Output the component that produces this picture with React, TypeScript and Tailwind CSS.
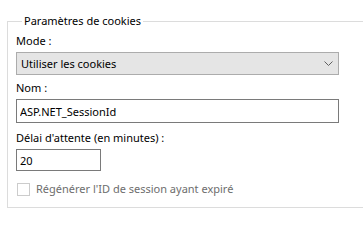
const font = { fontFamily: '"Noto Sans", "Segoe UI", sans-serif' }

function Chevron() {
  return (
    <svg width="9" height="5" viewBox="0 0 9 5" className="text-[#606060]">
      <polyline points="0.5,0.5 4.5,4.5 8.5,0.5" fill="none" stroke="currentColor" strokeWidth="1" />
    </svg>
  )
}

export default function App() {
  return (
    <div className="h-[217px] w-[363px] overflow-hidden bg-white text-[11px] text-black" style={font}>
      <fieldset className="ml-[7px] mt-[13px] w-[370px] border border-r-0 border-[#dcdcdc] pb-[10px] pl-[8px]">
        <legend className="ml-[6px] px-[2px] leading-[16px]">Paramètres de cookies</legend>
        <div className="flex w-[323px] flex-col pt-[4px]">
          <label className="leading-[16px]">Mode :</label>
          <div className="mt-[3px] flex h-[23px] items-center justify-between border border-[#acacac] bg-[#e5e5e5] pl-[4px] pr-[5px]">
            <span className="leading-[16px]">Utiliser les cookies</span>
            <Chevron />
          </div>
          <label className="mt-[5px] leading-[16px]">Nom :</label>
          <input
            readOnly
            value="ASP.NET_SessionId"
            className="mt-[3px] h-[24px] border border-[#7a7a7a] px-[3px] leading-[16px] outline-none"
          />
          <label className="mt-[7px] leading-[16px]">Délai d'attente (en minutes) :</label>
          <input
            readOnly
            value="20"
            className="mt-[3px] h-[22px] w-[85px] border border-[#7a7a7a] px-[3px] leading-[16px] outline-none"
          />
          <div className="mt-[10px] flex items-center gap-[6px] pl-[1px] text-[#6d6d6d]">
            <span className="h-[13px] w-[13px] border border-[#cccccc] bg-white" />
            <span className="leading-[16px]">Régénérer l'ID de session ayant expiré</span>
          </div>
        </div>
      </fieldset>
    </div>
  )
}
